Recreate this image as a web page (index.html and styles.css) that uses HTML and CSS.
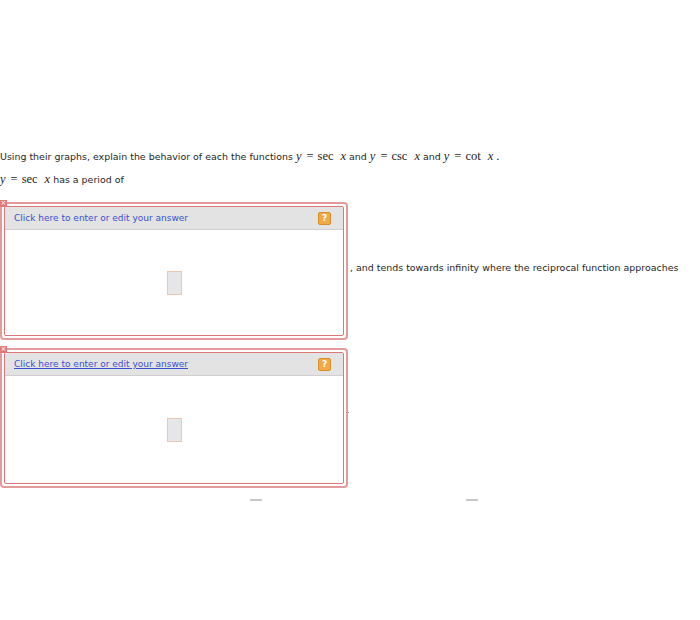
FILE: index.html
```html
<!DOCTYPE html>
<html>
<head>
<meta charset="utf-8">
<link rel="stylesheet" href="styles.css">
</head>
<body>
<div class="page">
  <p class="q">Using their graphs, explain the behavior of each the functions <span class="m">y</span><span class="mo">=</span><span class="mr">sec</span><span class="m">x</span>and <span class="m">y</span><span class="mo">=</span><span class="mr">csc</span><span class="m">x</span>and <span class="m">y</span><span class="mo">=</span><span class="mr">cot</span><span class="m">x</span><span class="mr">.</span></p>
  <p class="q2"><span class="m">y</span><span class="mo">=</span><span class="mr">sec</span><span class="m">x</span>has a period of</p>

  <div class="row">
    <div class="box">
      <span class="close">×</span>
      <div class="inner">
        <div class="head"><span class="link">Click here to enter or edit your answer</span><span class="help">?</span></div>
        <div class="body"><span class="slot"></span></div>
      </div>
    </div>
    <span class="after">, and tends towards infinity where the reciprocal function approaches</span>
  </div>

  <div class="row row2">
    <div class="box">
      <span class="close">×</span>
      <div class="inner">
        <div class="head"><span class="link u">Click here to enter or edit your answer</span><span class="help">?</span></div>
        <div class="body"><span class="slot"></span></div>
      </div>
    </div>
    <span class="dot"></span>
  </div>

  <div class="dashes"><span class="dash d1"></span><span class="dash d2"></span></div>
</div>
</body>
</html>
```

FILE: styles.css
```css
html, body { margin: 0; padding: 0; background: #fff; }
.page {
  padding-top: 149px;
  font-family: "DejaVu Sans", Verdana, sans-serif;
  font-size: 9.45px;
  color: #1e1e1e;
}
.q, .q2 { margin: 0; line-height: 14px; white-space: nowrap; }
.q2 { margin-top: 8px; }
.m { font-family: "Liberation Serif", serif; font-style: italic; font-size: 12.5px; }
.mr, .mo { font-family: "Liberation Serif", serif; font-size: 12.5px; }
.mo { margin: 0 4px 0 5px; }
.mr + .m { margin-left: 7px; margin-right: 3px; }
.row { display: flex; align-items: center; margin-top: 15px; }
.row2 { margin-top: 8px; align-items: flex-start; }
.box {
  position: relative;
  width: 340px;
  height: 130px;
  border: 2px solid #e59a9a;
  border-radius: 4px;
  padding: 2px;
  box-sizing: content-box;
  flex: none;
}
.row2 .box { height: 132px; }
.inner {
  height: 100%;
  border: 1px solid #de7777;
  border-radius: 2px;
  box-sizing: border-box;
  display: flex;
  flex-direction: column;
}
.head {
  height: 22px;
  background: #e3e3e3;
  border-bottom: 1px solid #cfcfcf;
  display: flex;
  align-items: center;
  justify-content: space-between;
  padding: 0 12px 0 9px;
  flex: none;
}
.link { color: #3a50d0; font-size: 9px; }
.link.u { text-decoration: underline; }
.help {
  width: 11px; height: 11px;
  background: #f2a948;
  border: 1px solid #d98e2c;
  border-radius: 2px;
  color: #fff;
  font-weight: bold;
  font-size: 9px;
  line-height: 11px;
  text-align: center;
  box-sizing: content-box;
}
.body { flex: 1; display: flex; align-items: center; justify-content: center; }
.slot {
  width: 13px; height: 22px;
  background: #e6e6e8;
  border: 1px solid #efc7b0;
}
.close {
  position: absolute;
  left: -2px; top: -4px;
  width: 7px; height: 7px;
  background: #e07a7a;
  color: #fff;
  font-size: 7px;
  line-height: 6px;
  text-align: center;
}
.after { margin-left: 2px; white-space: nowrap; margin-top: -8px; }
.dot { width: 1px; height: 1px; background: #999; margin-top: 64px; margin-left: 0; }
.dashes { position: relative; height: 20px; }
.dash { position: absolute; top: 11px; width: 12px; height: 2px; background: #c8c8c8; }
.d1 { left: 250px; }
.d2 { left: 466px; }
```
